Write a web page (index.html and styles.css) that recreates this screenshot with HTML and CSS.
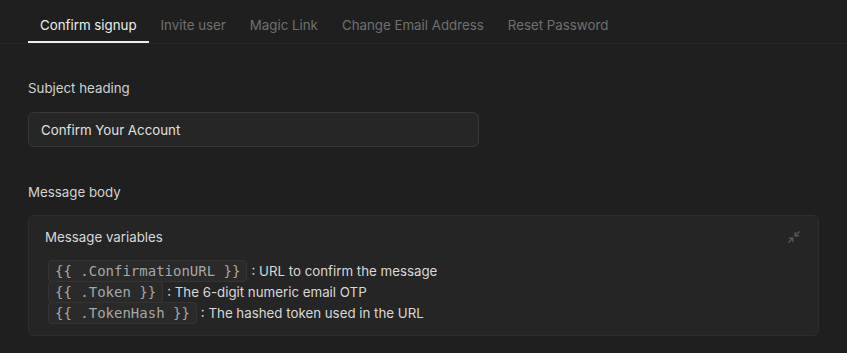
FILE: index.html
```html
<!DOCTYPE html>
<html>
<head>
<meta charset="utf-8">
<link rel="stylesheet" href="styles.css">
</head>
<body>
<nav class="tabs">
  <span class="tab active">Confirm signup</span>
  <span class="tab">Invite user</span>
  <span class="tab">Magic Link</span>
  <span class="tab">Change Email Address</span>
  <span class="tab">Reset Password</span>
</nav>
<main class="content">
  <label class="label">Subject heading</label>
  <div class="input">Confirm Your Account</div>
  <label class="label label-body">Message body</label>
  <section class="panel">
    <div class="panel-head">
      <span class="panel-title">Message variables</span>
      <svg class="icon" width="14" height="14" viewBox="0 0 24 24" fill="none" stroke="currentColor" stroke-width="2" stroke-linecap="round" stroke-linejoin="round"><polyline points="4 14 10 14 10 20"/><polyline points="20 10 14 10 14 4"/><line x1="14" y1="10" x2="21" y2="3"/><line x1="3" y1="21" x2="10" y2="14"/></svg>
    </div>
    <div class="vars">
      <div class="var"><code class="chip">{{ .ConfirmationURL }}</code>: URL to confirm the message</div>
      <div class="var"><code class="chip">{{ .Token }}</code>: The 6-digit numeric email OTP</div>
      <div class="var"><code class="chip">{{ .TokenHash }}</code>: The hashed token used in the URL</div>
    </div>
  </section>
</main>
</body>
</html>
```
FILE: styles.css
```css
* { box-sizing: border-box; }
html, body { margin: 0; padding: 0; }
body {
  background: #1f1f1f;
  font-family: Inter, "Noto Sans", sans-serif;
  font-size: 13.3px;
  color: #d4d4d4;
  width: 847px;
  height: 353px;
  overflow: hidden;
}
.tabs {
  display: flex;
  padding: 0 28px;
  border-bottom: 1px solid #292929;
}
.tab {
  padding: 15px 12px 6px;
  line-height: 20px;
  border-bottom: 2px solid transparent;
  color: #707070;
  white-space: nowrap;
}
.tab.active {
  color: #ededed;
  border-bottom-color: #ededed;
}
.content {
  padding: 0 28px;
  display: flex;
  flex-direction: column;
}
.label {
  display: block;
  margin-top: 34px;
  line-height: 20px;
  color: #d2d2d2;
}
.label-body { margin-top: 35px; }
.input {
  margin-top: 14px;
  width: 451px;
  height: 35px;
  padding: 0 12px;
  display: flex;
  align-items: center;
  background: #262626;
  border: 1px solid #383838;
  border-radius: 6px;
  color: #e0e0e0;
}
.panel {
  margin-top: 13px;
  background: #252525;
  border: 1px solid #2e2e2e;
  border-radius: 6px;
  padding: 11px 17px 12px 16px;
}
.panel-head {
  display: flex;
  justify-content: space-between;
  align-items: center;
  line-height: 20px;
}
.panel-title { color: #d8d8d8; }
.icon { color: #5e5e5e; }
.vars {
  margin-top: 13px;
  padding-left: 3px;
}
.var {
  display: flex;
  align-items: center;
  height: 21px;
  color: #d8d8d8;
  white-space: nowrap;
}
.chip {
  display: inline-block;
  font-family: "DejaVu Sans Mono", monospace;
  font-size: 14px;
  line-height: 20px;
  color: #a6a6a6;
  background: #2a2a2a;
  border: 1px solid #343434;
  border-radius: 4px;
  padding: 0 6px;
  margin-right: 4px;
}
```
